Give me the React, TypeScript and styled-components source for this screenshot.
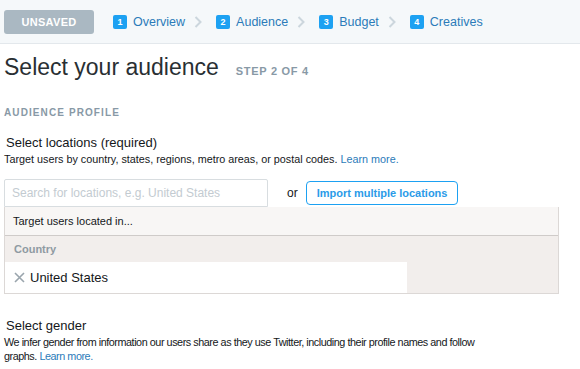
import styled, { createGlobalStyle } from "styled-components";

const GlobalStyle = createGlobalStyle`
  body {
    margin: 0;
    background: #ffffff;
    font-family: "Liberation Sans", Arial, sans-serif;
    color: #14171a;
  }
`;

const TopBar = styled.header`
  height: 43px;
  display: flex;
  align-items: center;
  padding-left: 4px;
  background: #f5f8fa;
  border-bottom: 1px solid #e3e8ec;
`;

const StatusButton = styled.button`
  width: 90px;
  height: 24px;
  border: none;
  border-radius: 3px;
  background: #aab8c2;
  color: #ffffff;
  font-family: inherit;
  font-size: 11px;
  font-weight: bold;
  letter-spacing: 0.3px;
  margin-right: 19px;
`;

const Steps = styled.nav`
  display: flex;
  align-items: center;
`;

const Step = styled.a`
  display: flex;
  align-items: center;
  gap: 6px;
  color: #2b7bb9;
  font-size: 12.5px;
  text-decoration: none;
`;

const StepBadge = styled.span`
  width: 14px;
  height: 14px;
  border-radius: 2px;
  background: #1da1f2;
  color: #ffffff;
  font-size: 9px;
  font-weight: bold;
  display: flex;
  align-items: center;
  justify-content: center;
`;

const Chevron = styled.svg`
  width: 8px;
  height: 12px;
  margin: 0 14px 0 3px;
`;

const Main = styled.main`
  padding: 0 4px;
`;

const TitleRow = styled.div`
  display: flex;
  align-items: baseline;
  gap: 17px;
  margin-top: 10px;
`;

const Title = styled.h1`
  margin: 0;
  font-size: 23px;
  font-weight: normal;
  color: #292f33;
`;

const StepCount = styled.span`
  font-size: 11px;
  font-weight: bold;
  color: #8899a6;
  letter-spacing: 0.7px;
`;

const SectionLabel = styled.h2`
  margin: 26px 0 0;
  font-size: 10px;
  font-weight: bold;
  color: #8899a6;
  letter-spacing: 1.1px;
`;

const FieldTitle = styled.h3<{ $top: number }>`
  margin: ${(p) => p.$top}px 0 0 2px;
  font-size: 13px;
  font-weight: normal;
  color: #14171a;
`;

const FieldHelp = styled.p<{ $narrow?: boolean }>`
  margin: 2px 0 0;
  font-size: 10.8px;
  line-height: 14px;
  letter-spacing: ${(p) => (p.$narrow ? "-0.45px" : "0")};
  color: #14171a;
`;

const Link = styled.a`
  color: #2b7bb9;
  text-decoration: none;
`;

const SearchRow = styled.div`
  display: flex;
  align-items: center;
  margin-top: 13px;
`;

const SearchInput = styled.input`
  box-sizing: border-box;
  width: 264px;
  height: 28px;
  border: 1px solid #d8dde0;
  border-radius: 2px 2px 0 0;
  padding: 0 7px;
  font-family: inherit;
  font-size: 12px;
  &::placeholder {
    color: #c3cbd1;
  }
`;

const OrText = styled.span`
  font-size: 12px;
  margin: 0 8px 0 19px;
`;

const ImportButton = styled.button`
  height: 24px;
  padding: 0 10px;
  border: 1px solid #1da1f2;
  border-radius: 4px;
  background: #ffffff;
  color: #2b9be8;
  font-family: inherit;
  font-size: 11px;
  font-weight: bold;
`;

const LocationPanel = styled.div`
  width: 555px;
  box-sizing: border-box;
  border: 1px solid #dcd8d6;
  border-top: none;
  background: #f2eeec;
`;

const PanelHeader = styled.div`
  height: 28px;
  display: flex;
  align-items: center;
  padding-left: 8px;
  font-size: 11px;
  background: #f8f6f5;
  border-bottom: 1px solid #cfcbc9;
`;

const GroupLabel = styled.div`
  height: 26px;
  display: flex;
  align-items: center;
  padding-left: 9px;
  font-size: 11px;
  font-weight: bold;
  color: #8f9aa2;
`;

const LocationItem = styled.div`
  width: 402px;
  height: 31px;
  display: flex;
  align-items: center;
  gap: 5px;
  padding-left: 9px;
  box-sizing: border-box;
  background: #ffffff;
  font-size: 13px;
`;

const RemoveIcon = styled.svg`
  width: 11px;
  height: 11px;
`;

const steps = ["Overview", "Audience", "Budget", "Creatives"];

export default function App() {
  return (
    <>
      <GlobalStyle />
      <TopBar>
        <StatusButton>UNSAVED</StatusButton>
        <Steps>
          {steps.map((name, i) => (
            <Step key={name} href="#">
              <StepBadge>{i + 1}</StepBadge>
              <span>{name}</span>
              {i < steps.length - 1 && (
                <Chevron viewBox="0 0 8 12">
                  <path d="M1.5 1 L6.5 6 L1.5 11" fill="none" stroke="#ccd6dd" strokeWidth="2" />
                </Chevron>
              )}
            </Step>
          ))}
        </Steps>
      </TopBar>
      <Main>
        <TitleRow>
          <Title>Select your audience</Title>
          <StepCount>STEP 2 OF 4</StepCount>
        </TitleRow>
        <SectionLabel>AUDIENCE PROFILE</SectionLabel>
        <FieldTitle $top={17}>Select locations (required)</FieldTitle>
        <FieldHelp>
          Target users by country, states, regions, metro areas, or postal codes. <Link href="#">Learn more.</Link>
        </FieldHelp>
        <SearchRow>
          <SearchInput placeholder="Search for locations, e.g. United States" />
          <OrText>or</OrText>
          <ImportButton>Import multiple locations</ImportButton>
        </SearchRow>
        <LocationPanel>
          <PanelHeader>Target users located in...</PanelHeader>
          <GroupLabel>Country</GroupLabel>
          <LocationItem>
            <RemoveIcon viewBox="0 0 11 11">
              <path d="M1 1 L10 10 M10 1 L1 10" stroke="#9aa5ad" strokeWidth="1.6" />
            </RemoveIcon>
            United States
          </LocationItem>
        </LocationPanel>
        <FieldTitle $top={24}>Select gender</FieldTitle>
        <FieldHelp $narrow>
          We infer gender from information our users share as they use Twitter, including their profile names and follow
          <br />
          graphs. <Link href="#">Learn more.</Link>
        </FieldHelp>
      </Main>
    </>
  );
}
